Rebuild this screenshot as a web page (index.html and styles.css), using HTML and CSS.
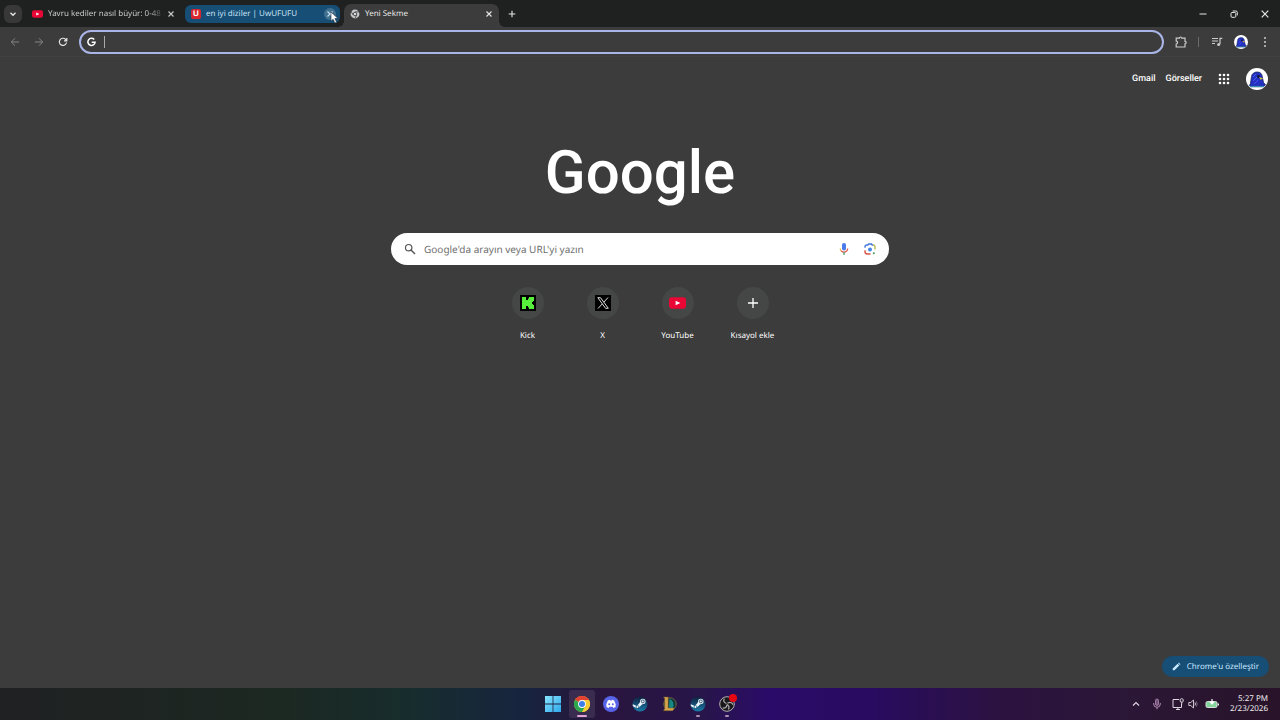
FILE: index.html
```html
<!DOCTYPE html>
<html lang="tr">
<head>
<meta charset="utf-8">
<title>Yeni Sekme</title>
<link rel="stylesheet" href="styles.css">
</head>
<body>
<svg class="defs" aria-hidden="true">
  <symbol id="close" viewBox="0 0 8 8"><path d="M1.5 1.5l5 5m0-5l-5 5" fill="none" stroke="currentColor" stroke-width="1.1"/></symbol>
  <symbol id="youtube" viewBox="0 0 18 12"><rect width="18" height="12" rx="3" fill="#e80735"/><path d="M7 3.5v5L12 6z" fill="#fff"/></symbol>
  <symbol id="steam" viewBox="0 0 16 16">
    <linearGradient id="steamFill" x1="0" y1="0" x2="0" y2="1"><stop offset="0" stop-color="#111d3b"/><stop offset="1" stop-color="#197caa"/></linearGradient>
    <circle cx="8" cy="8" r="7.5" fill="url(#steamFill)"/>
    <path d="M.8 8.3l4 1.700L7.500 7l1.200-2.600 4.300 2.400-3.300 2-2.200 2.200-2.300 1.200-2-.8L.8 10z" fill="#eef6fb"/>
    <circle cx="10.8" cy="5.4" r="2.700" fill="#eef6fb"/><circle cx="10.8" cy="5.4" r="1.500" fill="#dceaf2" stroke="#183c60" stroke-width=".8"/>
    <circle cx="5.5" cy="11" r="1.5" fill="none" stroke="#245b80" stroke-width=".7"/>
  </symbol>
  <symbol id="bird" viewBox="0 0 22 22">
    <circle cx="11" cy="11" r="11" fill="#fff"/>
    <path d="M3.5 17.5l1-2.2 1-6.8C6 5.5 8.3 4 11.2 4c3.4 0 5 2 5.1 5l1.2 5.5 2 2.2-2 2H5z" fill="#2430c0" stroke="#16205f" stroke-width=".8"/>
    <path d="M7 9l3-3M7 13l4-4M8 16l4-4" stroke="#4658ed" stroke-width="1"/>
    <circle cx="12.5" cy="8.5" r="1.4" fill="#101536"/><path d="M13.2 9l4 1.4-2.8 1.3z" fill="#d8bd3c"/>
    <path d="M4 18.5h14" stroke="#378cac" stroke-width="1.2"/>
  </symbol>
</svg>

<div class="browser">
  <header class="tabstrip">
    <button class="tab-search" aria-label="Sekme ara"><svg viewBox="0 0 8 8"><path d="M1.5 2.7L4 5.2l2.5-2.5" fill="none" stroke="currentColor" stroke-width="1.4"/></svg></button>
    <div class="tab tab-first">
      <svg class="yt-small"><use href="#youtube"/></svg>
      <span class="tab-title faded">Yavru kediler nasıl büyür: 0-48 g</span>
      <button class="close" aria-label="Kapat"><svg><use href="#close"/></svg></button>
    </div>
    <div class="tab tab-blue">
      <span class="u-icon">U</span>
      <span class="tab-title">en iyi diziler | UwUFUFU</span>
      <button class="close hovered" aria-label="Kapat"><svg><use href="#close"/></svg>
        <svg class="pointer" viewBox="0 0 9 13"><path d="M1 1v9.2l2.1-2 1.8 3.9 1.8-.8-1.8-3.8H8z" fill="#fff" stroke="#16283a" stroke-width=".6"/></svg>
      </button>
    </div>
    <div class="tab tab-active">
      <svg class="favicon" viewBox="0 0 12 12"><circle cx="6" cy="6" r="5.3" fill="#c7c9cb"/><path d="M6 3.5h4.7M3.8 7.2L1.5 3.3M8.2 7.2l-2.4 4" stroke="#3c3c3c" stroke-width="1"/><circle cx="6" cy="6" r="2.1" fill="#d7d9db" stroke="#3c3c3c"/></svg>
      <span class="tab-title">Yeni Sekme</span>
      <button class="close" aria-label="Kapat"><svg><use href="#close"/></svg></button>
    </div>
    <button class="new-tab" aria-label="Yeni sekme"><svg viewBox="0 0 8 8"><path d="M4 .7v6.6M.7 4h6.6" stroke="currentColor" stroke-width="1.1"/></svg></button>
    <div class="window-buttons">
      <button aria-label="Simge durumuna küçült"><svg viewBox="0 0 8 8"><path d="M.5 4h7" stroke="currentColor"/></svg></button>
      <button aria-label="Geri yükle"><svg viewBox="0 0 8 8" fill="none" stroke="currentColor"><rect x="1" y="2.5" width="4.8" height="4.8" rx="1"/><path d="M2.7 1h3.2q1.4 0 1.4 1.4v3"/></svg></button>
      <button aria-label="Pencereyi kapat"><svg viewBox="0 0 8 8"><path d="M.7.7l6.6 6.6m0-6.6L.7 7.3" stroke="currentColor" stroke-width="1.2"/></svg></button>
    </div>
  </header>

  <nav class="toolbar" aria-label="Araç çubuğu">
    <div class="nav-buttons">
      <button class="muted" aria-label="Geri"><svg viewBox="0 0 10 10"><path d="M9 5H1.3M5 1.3L1.3 5 5 8.7" fill="none" stroke="currentColor"/></svg></button>
      <button class="muted" aria-label="İleri"><svg viewBox="0 0 10 10"><path d="M1 5h7.7M5 1.3L8.7 5 5 8.7" fill="none" stroke="currentColor"/></svg></button>
      <button aria-label="Yenile"><svg viewBox="0 0 10 10"><path d="M8.5 5.5A3.6 3.6 0 1 1 7.6 2.4L8.7 3.5M8.8 1v2.8H6" fill="none" stroke="currentColor" stroke-width="1.2"/></svg></button>
    </div>
    <label class="address">
      <svg class="g-icon" viewBox="0 0 10 10"><path d="M8 2.2A4 4 0 1 0 9 5.3H5.2" fill="none" stroke="#fff" stroke-width="1.7"/></svg>
      <span class="caret"></span>
      <input type="text" aria-label="Adres çubuğu">
    </label>
    <div class="toolbar-actions">
      <button aria-label="Uzantılar"><svg class="puzzle" viewBox="0 0 12 12"><path d="M1.200 2.200h3.200a1.200 1.200 0 0 1 2.400 0H10v3.200a1.200 1.200 0 0 1 0 2.400v3.200H1.200V8a1.400 1.400 0 0 0 0-2.800z" fill="none" stroke="currentColor" stroke-width="1.2"/></svg></button>
      <span class="divider"></span>
      <button aria-label="Medya"><svg class="music" viewBox="0 0 12 10"><path d="M1 1.5h6M1 4h6M1 6.5h3M9 7V1.3h2.3" fill="none" stroke="currentColor" stroke-width="1.2"/><circle cx="7.7" cy="7.5" r="1.5" fill="currentColor"/></svg></button>
      <button aria-label="Profil"><svg class="small-bird"><use href="#bird"/></svg></button>
      <button aria-label="Menü"><svg class="dots" viewBox="0 0 4 12" fill="currentColor"><circle cx="2" cy="2" r="1"/><circle cx="2" cy="6" r="1"/><circle cx="2" cy="10" r="1"/></svg></button>
    </div>
  </nav>

  <main class="page">
    <div class="account-bar">
      <a href="#">Gmail</a><a href="#">Görseller</a>
      <button aria-label="Google uygulamaları"><svg class="apps" viewBox="0 0 12 12" fill="currentColor"><circle cx="2" cy="2" r="1.3"/><circle cx="6" cy="2" r="1.3"/><circle cx="10" cy="2" r="1.3"/><circle cx="2" cy="6" r="1.3"/><circle cx="6" cy="6" r="1.3"/><circle cx="10" cy="6" r="1.3"/><circle cx="2" cy="10" r="1.3"/><circle cx="6" cy="10" r="1.3"/><circle cx="10" cy="10" r="1.3"/></svg></button>
      <button aria-label="Google hesabı"><svg class="avatar"><use href="#bird"/></svg></button>
    </div>
    <h1 class="logo">Google</h1>
    <form class="search">
      <svg class="lens" viewBox="0 0 12 12"><circle cx="4.7" cy="4.7" r="3.2" fill="none" stroke="#555" stroke-width="1.2"/><path d="M7 7l4 4" stroke="#555" stroke-width="1.4"/></svg>
      <input type="text" aria-label="Google'da arayın" placeholder="Google'da arayın veya URL'yi yazın">
      <button type="button" aria-label="Sesli arama"><svg viewBox="0 0 12 14"><rect x="4" y="1" width="4" height="7.4" rx="2" fill="#4b7bea"/><path d="M2.2 6.5A3.8 3.8 0 0 0 3.3 9" fill="none" stroke="#e3ad45" stroke-width="1.2"/><path d="M3.3 9a3.8 3.8 0 0 0 6.5-2.5" fill="none" stroke="#db5348" stroke-width="1.2"/><path d="M6 10.3V13" stroke="#43a465" stroke-width="1.3"/></svg></button>
      <button type="button" aria-label="Görselle arama"><svg viewBox="0 0 12 14" fill="none" stroke-width="1.4"><path d="M1 5.8V5q0-2 2-2h.8l.8-1h2.8l.8 1H9" stroke="#4278dc"/><path d="M9 3q2 0 2 2v2.5" stroke="#b6b957"/><path d="M1 8.3v1.2q0 2.5 2.5 2.5h3" stroke="#d95349"/><circle cx="6" cy="7.5" r="2" fill="#4285e9"/><circle cx="9.8" cy="11.2" r="1" fill="#3b9c57"/></svg></button>
    </form>
    <div class="shortcuts">
      <a href="#"><span class="disc"><svg class="tile" viewBox="0 0 16 16"><path fill="#000" d="M0 0h16v16H0z"/><path d="M2 2h4v3h2V3.500h1V2h5v4h-1v1h-1v2h1v1h1v4H9v-1.500H8V11H6v3H2z" fill="#57ef3c"/></svg></span>Kick</a>
      <a href="#"><span class="disc"><svg class="tile" viewBox="0 0 16 16"><path fill="#000" d="M0 0h16v16H0z"/><path d="M2.8 2.7h2.7l7.8 10.600h-2.700zM13 2.500L8.800 7.200M7.200 9L3 13.500" fill="none" stroke="#ddd"/></svg></span>X</a>
      <a href="#"><span class="disc"><svg class="yt-large"><use href="#youtube"/></svg></span>YouTube</a>
      <a href="#"><span class="disc"><svg class="plus" viewBox="0 0 10 10"><path d="M5 0v10M0 5h10" stroke="#fff" stroke-width="1.300"/></svg></span>Kısayol ekle</a>
    </div>
    <button class="customize"><svg viewBox="0 0 10 10"><path d="M.8 7.300L6.200 1.900l1.900 1.900-5.400 5.400H.8zM6.800 1.300l.7-.7 1.900 1.900-.7.700z" fill="currentColor"/></svg>Chrome'u özelleştir</button>
  </main>
</div>

<footer class="taskbar">
  <div class="apps-row">
    <button aria-label="Başlat"><svg viewBox="0 0 16 16"><linearGradient id="win" x2="1" y2="1"><stop stop-color="#86e4ff"/><stop offset="1" stop-color="#2fa9eb"/></linearGradient><path d="M0 0h7.600v7.600H0zM8.400 0H16v7.600H8.400zM0 8.400h7.600V16H0zM8.400 8.400H16V16H8.400z" fill="url(#win)"/></svg></button>
    <button class="current" aria-label="Chrome"><svg viewBox="0 0 16 16"><circle cx="8" cy="8" r="8" fill="#efc52d"/><path d="M8 8L1.070 4A8 8 0 0 1 14.930 4z" fill="#e34132"/><path d="M8 8L1.070 4A8 8 0 0 0 8 16l3.500-6z" fill="#2aa64f"/><path d="M8 4h6.930A8 8 0 0 1 8 16l3.500-6z" fill="#f5cc35"/><circle cx="8" cy="8" r="3.900" fill="#fff"/><circle cx="8" cy="8" r="3" fill="#3c7de8"/></svg></button>
    <button aria-label="Discord"><svg viewBox="0 0 16 16"><circle cx="8" cy="8" r="8" fill="#5864e8"/><path d="M4.800 4.500l2-.7.5.8h1.400l.5-.8 2 .7 1.500 3.800-.1 2.600-2.200 1-.8-1.200H6.400l-.8 1.200-2.200-1-.1-2.600z" fill="#fff"/><circle cx="6.200" cy="8.200" r="1" fill="#5864e8"/><circle cx="9.800" cy="8.200" r="1" fill="#5864e8"/></svg></button>
    <button aria-label="Steam"><svg><use href="#steam"/></svg></button>
    <button aria-label="League of Legends"><svg viewBox="0 0 16 16"><circle cx="9" cy="8" r="6.200" fill="#10333a" stroke="#6f6943"/><path d="M8.500 3q5.500 2 3.600 9H8z" fill="#168884"/><path d="M2.500 1h4.700v11h6.300l-1.700 2.700H2.500l1.200-2V2.500z" fill="#d3a44e" stroke="#705328" stroke-width=".5"/></svg></button>
    <button class="running" aria-label="Steam penceresi"><svg><use href="#steam"/></svg></button>
    <button class="running" aria-label="OBS Studio"><svg viewBox="0 0 16 16"><circle cx="8" cy="8" r="7.300" fill="#19191b" stroke="#b7b1b3"/><path d="M7.500 7.500Q3.500 6 5.300 2.500M8.500 7.200q3.800-2 5.500 1.500M8 8.500q-.5 4.300-4.300 3.500M8 8.500q3 1.700 1.500 5" fill="none" stroke="#a9a4a8" stroke-width="1.300"/></svg><span class="recording"></span></button>
  </div>
  <div class="tray">
    <button aria-label="Gizli simgeler"><svg class="s8" viewBox="0 0 8 8"><path d="M1 5.500l3-3 3 3" fill="none" stroke="currentColor" stroke-width="1.200"/></svg></button>
    <button class="mic" aria-label="Mikrofon"><svg class="s10" viewBox="0 0 10 12"><rect x="3.500" y="1" width="3" height="6.500" rx="1.500" fill="#705079" stroke="#c196c2" stroke-width=".7"/><path d="M1.700 5v1a3.300 3.300 0 0 0 6.600 0V5M5 9.300v2" fill="none" stroke="#c196c2" stroke-width=".9"/></svg></button>
    <button aria-label="Ağ"><svg class="s12" viewBox="0 0 12 12" fill="none" stroke="currentColor"><path d="M7 1.500H1v8h8.500V6M4 11.500h4M5.800 9.500v2M9.700 4v2.500"/><rect x="8.200" y=".8" width="3" height="3.200" rx="1"/></svg></button>
    <button aria-label="Ses"><svg class="s10" viewBox="0 0 10 10"><path d="M.8 3.500h2L5.500 1v8L2.800 6.500h-2zM7 3.500q1 1.500 0 3" fill="none" stroke="currentColor" stroke-width=".9"/><path d="M8.200 2.200q2 2.800 0 5.600" fill="none" stroke="#75647a"/></svg></button>
    <button aria-label="Pil"><svg class="s14" viewBox="0 0 14 10"><rect x="1" y="2.500" width="11" height="6" rx="1.500" fill="#83d69b" stroke="#ddd"/><path d="M13.300 4.500v2M7 0v4M5 2.700L7 5l2-2.300" fill="none" stroke="#fff" stroke-width="1.200"/></svg></button>
    <time datetime="2026-02-23T17:27">5:27 PM<br>2/23/2026</time>
  </div>
</footer>
</body>
</html>
```

FILE: styles.css
```css
* { box-sizing: border-box; }
body {
  margin: 0;
  min-height: 100vh;
  display: flex;
  flex-direction: column;
  background: #3c3c3c;
  color: #e6e6e6;
  font: 8px/12px "Noto Sans", "Open Sans", sans-serif;
  text-rendering: geometricPrecision;
}
.defs { position: absolute; width: 0; height: 0; }
button, input { font: inherit; color: inherit; background: none; border: 0; padding: 0; margin: 0; outline: 0; text-rendering: inherit; }
button { display: flex; align-items: center; justify-content: center; }
a { color: inherit; text-decoration: none; }
svg { display: block; flex: none; }
.browser { flex: 1; display: flex; flex-direction: column; }

.tabstrip { display: flex; align-items: center; height: 27px; padding: 0 4px; background: #1f2020; }
.tab-search { width: 18px; height: 18px; border-radius: 6px; background: #383838; }
.tab-search svg { width: 8px; height: 8px; }
.tab { display: flex; align-items: center; height: 18px; width: 155px; padding: 0 4px 0 6px; }
.tab-title { flex: 1; min-width: 0; white-space: nowrap; }
.faded { -webkit-mask-image: linear-gradient(90deg, #000 85%, transparent); mask-image: linear-gradient(90deg, #000 85%, transparent); }
.close { position: relative; width: 12px; height: 12px; margin-left: 4px; border-radius: 50%; }
.close > svg:first-child { width: 8px; height: 8px; }
.tab-first { margin-left: 4px; color: #c9c9c9; }
.tab-first .close { margin-left: 0; }
.yt-small { width: 11px; height: 8px; margin-right: 5px; }
.tab-blue { margin-left: 4px; background: #174e76; color: #c6e2f5; border-radius: 6px; }
.u-icon { width: 10px; height: 10px; margin-right: 5px; border-radius: 2px; background: #d8272e; color: #fff; font: 700 8px/10px "Liberation Sans", sans-serif; text-align: center; }
.hovered { background: #42708f; }
.close .pointer { position: absolute; left: 6px; top: 3px; width: 9px; height: 13px; }
.tab-active { position: relative; height: 23px; align-self: flex-end; margin-left: 4px; padding-bottom: 4px; background: #3c3c3c; border-radius: 7px 7px 0 0; }
.tab-active::before, .tab-active::after { content: ""; position: absolute; bottom: 0; width: 6px; height: 6px; }
.tab-active::before { left: -6px; background: radial-gradient(circle at 0 0, transparent 6px, #3c3c3c 6px); }
.tab-active::after { right: -6px; background: radial-gradient(circle at 100% 0, transparent 6px, #3c3c3c 6px); }
.favicon { width: 10px; height: 10px; margin-right: 5px; }
.new-tab { width: 18px; height: 18px; margin-left: 4px; }
.new-tab svg { width: 8px; height: 8px; }
.window-buttons { display: flex; margin-left: auto; }
.window-buttons button { width: 31px; height: 27px; }
.window-buttons button:last-child { width: 23px; margin-left: 4px; }
.window-buttons svg { width: 8px; height: 8px; }

.toolbar { display: flex; align-items: center; height: 30px; padding: 0 8px; border-bottom: 1px solid #414141; }
.nav-buttons { display: flex; gap: 10px; }
.nav-buttons button { width: 14px; height: 20px; }
.nav-buttons svg { width: 10px; height: 10px; }
.muted { color: #858585; }
.address { flex: 1; display: flex; align-items: center; height: 24px; margin-left: 9px; padding: 0 12px 0 6px; border: 2px solid #a9b5e6; border-radius: 12px; }
.address input { flex: 1; min-width: 0; }
.g-icon { width: 9px; height: 10px; }
.caret { width: 1px; height: 12px; margin-left: 8px; background: #aaa; }
.toolbar-actions { display: flex; align-items: center; margin-left: 11px; color: #cbcbcb; }
.puzzle { width: 12px; height: 12px; }
.divider { width: 1px; height: 10px; margin: 0 12px 0 11px; background: #6a6a6a; }
.music { width: 12px; height: 10px; }
.small-bird { width: 14px; height: 14px; margin-left: 11px; }
.dots { width: 4px; height: 12px; margin: 0 5px 0 15px; }

.page { flex: 1; display: flex; flex-direction: column; align-items: center; position: relative; color: #fff; }
.account-bar { align-self: stretch; display: flex; align-items: center; justify-content: flex-end; height: 44px; padding-right: 12px; font: 500 9px/12px Roboto, sans-serif; }
.account-bar a + a { margin-left: 10px; }
.account-bar button { margin-left: 16px; }
.apps { width: 12px; height: 12px; }
.avatar { width: 22px; height: 22px; }
.logo { margin: 32px 0 0; height: 100px; color: #fff; font: 500 60px/80px Roboto, sans-serif; }
.search { display: flex; align-items: center; width: 498px; max-width: 90%; height: 32px; padding: 0 13px; border-radius: 16px; background: #fff; }
.search input { flex: 1; min-width: 0; margin-left: 8px; font-size: 10px; line-height: 16px; color: #555; }
.search input::placeholder { color: #707070; opacity: 1; }
.search button { margin-left: 14px; }
.search svg { width: 12px; height: 14px; }
.search .lens { width: 12px; height: 12px; }
.shortcuts { display: flex; margin-top: 22px; }
.shortcuts a { display: flex; flex-direction: column; align-items: center; width: 75px; gap: 11px; }
.disc { display: flex; align-items: center; justify-content: center; width: 32px; height: 32px; border-radius: 50%; background: #454746; }
.tile { width: 16px; height: 16px; }
.yt-large { width: 17px; height: 12px; }
.plus { width: 10px; height: 10px; }
.customize { position: absolute; right: 11px; bottom: 11px; height: 21px; gap: 6px; padding: 0 10px; border-radius: 11px; background: #174e76; color: #c8e8ff; }
.customize svg { width: 9px; height: 9px; }

.taskbar { display: grid; grid-template-columns: 1fr auto 1fr; align-items: center; height: 32px; background: linear-gradient(90deg, #202122 0%, #1c2822 22%, #172d2d 32%, #17243f 41%, #29153d 47%, #28154a 55%, #2a0b69 60%, #290b60 68%, #2b1240 78%, #2b1736 88%, #281329 100%); }
.apps-row { grid-column: 2; display: flex; gap: 3px; }
.apps-row button { position: relative; width: 26px; height: 28px; border-radius: 3px; }
.apps-row svg { width: 16px; height: 16px; }
.apps-row .current { background: #3a2c4e; }
.current::after, .running::after { content: ""; position: absolute; bottom: 1px; left: 50%; width: 4px; height: 2px; margin-left: -2px; border-radius: 1px; background: #a991af; }
.current::after { width: 10px; margin-left: -5px; background: #e3a4dc; }
.recording { position: absolute; right: 3px; top: 4px; width: 8px; height: 8px; border-radius: 50%; background: #e80612; }
.tray { display: flex; align-items: center; justify-content: flex-end; padding-right: 12px; color: #ddd5df; }
.s8 { width: 8px; height: 8px; }
.s10 { width: 10px; height: 12px; margin-left: 4px; }
.mic .s10 { margin: 0 10px 0 12px; }
.s12 { width: 12px; height: 12px; }
.s14 { width: 14px; height: 10px; margin-left: 7px; }
.tray time { margin-left: 11px; color: #eee; text-align: right; line-height: 10px; }
```
